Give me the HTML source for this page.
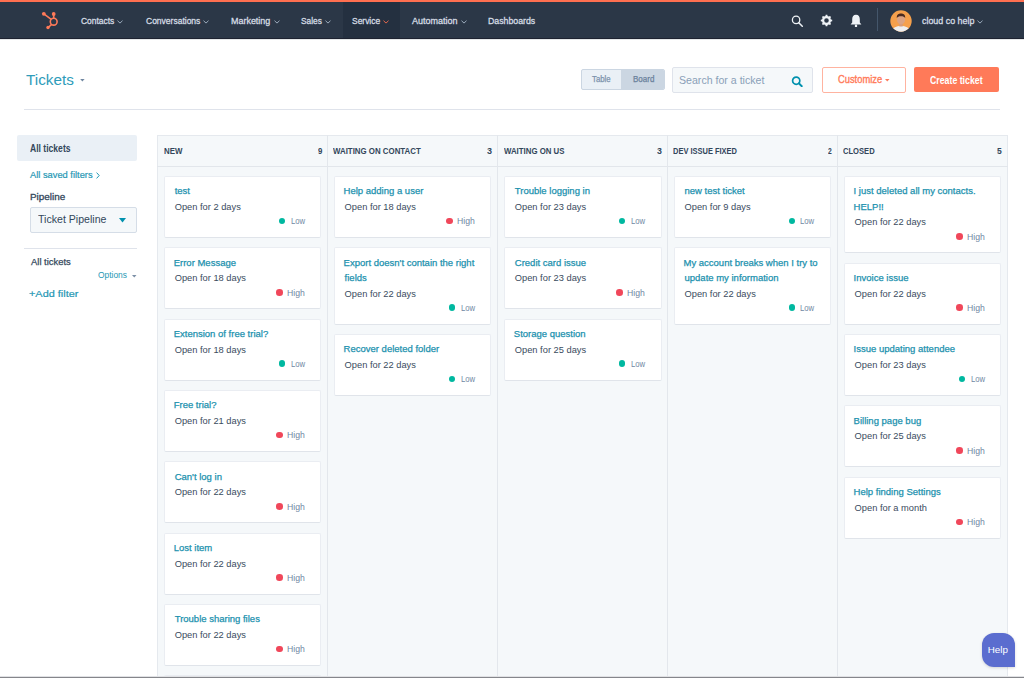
<!DOCTYPE html>
<html><head><meta charset="utf-8"><style>
*{box-sizing:border-box;margin:0;padding:0}
html,body{width:1024px;height:678px;overflow:hidden;background:#fff;font-family:"Liberation Sans",sans-serif;color:#33475b}
.a{position:absolute;white-space:nowrap}
#topbar{position:absolute;left:0;top:0;width:1024px;height:2px;background:#ff6f50}
#nav{position:absolute;left:0;top:2px;width:1024px;height:36px;background:#2b3747}
#navline{position:absolute;left:0;top:38px;width:1024px;height:1px;background:#1d2230;box-shadow:0 1px 0 #e4e7e8}
#svc{position:absolute;left:342.5px;top:2px;width:57.5px;height:36px;background:#243040}
.chev{position:absolute}
#hline{position:absolute;left:24px;top:108.5px;width:976px;height:1px;background:#dfe3eb}
#bottomline{position:absolute;left:0;top:676px;width:1024px;height:2px;background:linear-gradient(#e0e1e4 0,#e0e1e4 1px,#85868b 1px)}
#toggle{position:absolute;left:581px;top:69px;width:84px;height:21px;border:1px solid #cbd6e2;border-radius:2px;background:#eaf0f6;overflow:hidden}
#toggle .b{position:absolute;left:39px;top:0;width:44px;height:19px;background:#cbd6e2}
#search{position:absolute;left:672px;top:67px;width:141px;height:26px;border:1px solid #dfe3eb;border-radius:2px;background:#f5f8fa}
#cust{position:absolute;left:822px;top:66.5px;width:84px;height:26px;border:1px solid #ffb3a0;border-radius:2px;background:#fff}
#create{position:absolute;left:914px;top:66.7px;width:85px;height:25.5px;border-radius:2px;background:#ff7a59}
#sideact{position:absolute;left:17px;top:135px;width:120px;height:26px;background:#eaf0f6;border-radius:2px}
#sel{position:absolute;left:30px;top:207.3px;width:107px;height:25.5px;border:1px solid #d5dde7;border-radius:2px;background:#f5f8fa}
#sdiv{position:absolute;left:24px;top:248px;width:113px;height:1px;background:#dfe3eb}
#board{position:absolute;left:157px;top:134.5px;width:851px;height:560px;background:#f5f8fa;border:1px solid #e5e9ee}
#bhead{position:absolute;left:157px;top:166px;width:851px;height:1px;background:#e2e6eb}
.col{position:absolute;top:135px;width:1px;height:545px;background:#e3e7ec}
.card{position:absolute;width:157.5px;background:#fff;border:1px solid #eaedf2;border-bottom-color:#e0e4ea;border-radius:2px}
.dot{position:absolute;width:6.2px;height:6.2px;border-radius:50%}
#help{position:absolute;left:982px;top:633px;width:33px;height:34px;background:#5b6dcf;border-radius:12px 12px 0 12px;box-shadow:0 1px 3px rgba(0,0,0,0.15)}
</style></head><body>
<div id="topbar"></div><div id="nav"></div><div id="svc"></div><div id="navline"></div>
<svg class="a" style="left:40px;top:10px" width="22" height="22" viewBox="0 0 22 22">
<g fill="none" stroke="#ff7a59" stroke-width="1.6">
<circle cx="13.7" cy="11.7" r="3.4"/>
<line x1="13.7" y1="8.3" x2="13.7" y2="4.5"/>
<line x1="11.2" y1="9.4" x2="4.2" y2="4.2"/>
<line x1="11.6" y1="14.4" x2="8.3" y2="17.5"/>
</g>
<g fill="#ff7a59"><circle cx="13.7" cy="4" r="1.9"/><circle cx="3.8" cy="3.8" r="1.9"/><circle cx="8" cy="17.5" r="1.7"/></g>
</svg>
<div class="a" style="left:80.80px;top:16.00px;font-size:9.4px;line-height:9.4px;font-weight:400;color:#d5dce4;transform:scaleX(0.9000);transform-origin:0 0;-webkit-text-stroke:0.3px #d5dce4;">Contacts</div>
<svg class="chev" style="left:117px;top:19.7px" width="6" height="4" viewBox="0 0 6 4"><path d="M0.5 0.7 L3.0 3.1 L5.5 0.7" fill="none" stroke="#a3b3c4" stroke-width="0.95"/></svg>
<div class="a" style="left:145.60px;top:16.00px;font-size:9.4px;line-height:9.4px;font-weight:400;color:#d5dce4;transform:scaleX(0.9067);transform-origin:0 0;-webkit-text-stroke:0.3px #d5dce4;">Conversations</div>
<svg class="chev" style="left:203px;top:19.7px" width="6" height="4" viewBox="0 0 6 4"><path d="M0.5 0.7 L3.0 3.1 L5.5 0.7" fill="none" stroke="#a3b3c4" stroke-width="0.95"/></svg>
<div class="a" style="left:231.24px;top:16.00px;font-size:9.4px;line-height:9.4px;font-weight:400;color:#d5dce4;transform:scaleX(0.9550);transform-origin:0 0;-webkit-text-stroke:0.3px #d5dce4;">Marketing</div>
<svg class="chev" style="left:273.7px;top:19.7px" width="6" height="4" viewBox="0 0 6 4"><path d="M0.5 0.7 L3.0 3.1 L5.5 0.7" fill="none" stroke="#a3b3c4" stroke-width="0.95"/></svg>
<div class="a" style="left:301.21px;top:16.00px;font-size:9.4px;line-height:9.4px;font-weight:400;color:#d5dce4;transform:scaleX(0.8864);transform-origin:0 0;-webkit-text-stroke:0.3px #d5dce4;">Sales</div>
<svg class="chev" style="left:324.5px;top:19.7px" width="6" height="4" viewBox="0 0 6 4"><path d="M0.5 0.7 L3.0 3.1 L5.5 0.7" fill="none" stroke="#a3b3c4" stroke-width="0.95"/></svg>
<div class="a" style="left:352.30px;top:16.00px;font-size:9.4px;line-height:9.4px;font-weight:400;color:#d5dce4;transform:scaleX(0.9000);transform-origin:0 0;-webkit-text-stroke:0.3px #d5dce4;">Service</div>
<svg class="chev" style="left:382.7px;top:19.7px" width="6" height="4" viewBox="0 0 6 4"><path d="M0.5 0.7 L3.0 3.1 L5.5 0.7" fill="none" stroke="#ef6a4c" stroke-width="0.95"/></svg>
<div class="a" style="left:411.90px;top:16.00px;font-size:9.4px;line-height:9.4px;font-weight:400;color:#d5dce4;transform:scaleX(0.9596);transform-origin:0 0;-webkit-text-stroke:0.3px #d5dce4;">Automation</div>
<svg class="chev" style="left:461px;top:19.7px" width="6" height="4" viewBox="0 0 6 4"><path d="M0.5 0.7 L3.0 3.1 L5.5 0.7" fill="none" stroke="#a3b3c4" stroke-width="0.95"/></svg>
<div class="a" style="left:487.97px;top:16.00px;font-size:9.4px;line-height:9.4px;font-weight:400;color:#d5dce4;transform:scaleX(0.9347);transform-origin:0 0;-webkit-text-stroke:0.3px #d5dce4;">Dashboards</div>
<svg class="a" style="left:789px;top:13px" width="16" height="16" viewBox="0 0 16 16"><circle cx="7.1" cy="6.9" r="3.7" fill="none" stroke="#eef2f6" stroke-width="1.3"/><line x1="9.8" y1="9.7" x2="13.3" y2="13.2" stroke="#eef2f6" stroke-width="1.5" stroke-linecap="round"/></svg>
<svg class="a" style="left:818.9px;top:12.9px" width="15" height="15" viewBox="-7.5 -7.5 15 15"><g fill="#eef2f6"><path d="M-1.3 -3.6 L-0.8 -5.7 L0.8 -5.7 L1.3 -3.6 Z" transform="rotate(0)"/><path d="M-1.3 -3.6 L-0.8 -5.7 L0.8 -5.7 L1.3 -3.6 Z" transform="rotate(45)"/><path d="M-1.3 -3.6 L-0.8 -5.7 L0.8 -5.7 L1.3 -3.6 Z" transform="rotate(90)"/><path d="M-1.3 -3.6 L-0.8 -5.7 L0.8 -5.7 L1.3 -3.6 Z" transform="rotate(135)"/><path d="M-1.3 -3.6 L-0.8 -5.7 L0.8 -5.7 L1.3 -3.6 Z" transform="rotate(180)"/><path d="M-1.3 -3.6 L-0.8 -5.7 L0.8 -5.7 L1.3 -3.6 Z" transform="rotate(225)"/><path d="M-1.3 -3.6 L-0.8 -5.7 L0.8 -5.7 L1.3 -3.6 Z" transform="rotate(270)"/><path d="M-1.3 -3.6 L-0.8 -5.7 L0.8 -5.7 L1.3 -3.6 Z" transform="rotate(315)"/></g><circle r="3.4" fill="none" stroke="#eef2f6" stroke-width="2.2"/></svg>
<svg class="a" style="left:850px;top:14px" width="12" height="14" viewBox="0 0 12 14"><path d="M6 0.8 C3.4 0.8 2.2 2.8 2.2 5.2 L2.2 8.6 L0.6 10.6 L11.4 10.6 L9.8 8.6 L9.8 5.2 C9.8 2.8 8.6 0.8 6 0.8 Z" fill="#eef2f6"/><rect x="4.9" y="10.6" width="2.2" height="2.4" fill="#eef2f6"/></svg>
<div class="a" style="left:877px;top:8px;width:1px;height:23px;background:#44566b"></div>
<svg class="a" style="left:890px;top:9.5px" width="22" height="22" viewBox="0 0 22 22"><defs><clipPath id="av"><circle cx="11" cy="11" r="10.7"/></clipPath></defs><g clip-path="url(#av)"><rect width="22" height="22" fill="#f5a04c"/><path d="M1.5 22 C2.5 17.5 6.5 16 11 16 C15.5 16 19.5 17.5 20.5 22 Z" fill="#eeeeef"/><rect x="9.3" y="13" width="3.4" height="3.5" fill="#d49a7a"/><ellipse cx="11" cy="9.6" rx="4.1" ry="4.9" fill="#dca383"/><path d="M6.8 8.2 C6.6 4.6 8.6 3.6 11 3.6 C13.4 3.6 15.4 4.6 15.2 8.2 C14.6 6.6 13 6.2 11 6.2 C9 6.2 7.4 6.6 6.8 8.2Z" fill="#4b2a1f"/></g></svg>
<div class="a" style="left:921.60px;top:15.90px;font-size:9.4px;line-height:9.4px;font-weight:400;color:#d5dce4;transform:scaleX(0.9491);transform-origin:0 0;-webkit-text-stroke:0.3px #d5dce4;">cloud co help</div>
<svg class="chev" style="left:976.7px;top:19.7px" width="6" height="4" viewBox="0 0 6 4"><path d="M0.5 0.7 L3.0 3.1 L5.5 0.7" fill="none" stroke="#a3b3c4" stroke-width="0.95"/></svg>
<div class="a" style="left:26.10px;top:71.70px;font-size:15px;line-height:15px;font-weight:400;color:#2e9cba;transform:scaleX(1.0191);transform-origin:0 0;">Tickets</div>
<svg class="a" style="left:80px;top:78.7px" width="5" height="3" viewBox="0 0 5 3"><path d="M0.2 0 L4.6 0 L2.4 2.5Z" fill="#6f86a0"/></svg>
<div id="hline"></div>
<div id="toggle"><div class="b"></div></div>
<div class="a" style="left:592.00px;top:75.00px;font-size:8.4px;line-height:8.4px;font-weight:400;color:#7d93ad;transform:scaleX(0.9300);transform-origin:0 0;-webkit-text-stroke:0.25px #7d93ad;">Table</div>
<div class="a" style="left:632.60px;top:75.00px;font-size:8.4px;line-height:8.4px;font-weight:400;color:#6a819c;transform:scaleX(0.9545);transform-origin:0 0;-webkit-text-stroke:0.25px #6a819c;">Board</div>
<div id="search"></div>
<div class="a" style="left:678.82px;top:75.20px;font-size:10.8px;line-height:10.8px;font-weight:400;color:#8aa0b8;transform:scaleX(0.9814);transform-origin:0 0;">Search for a ticket</div>
<svg class="a" style="left:791px;top:76px" width="13" height="11" viewBox="0 0 13 11"><circle cx="5.2" cy="4.7" r="3.6" fill="none" stroke="#0091ae" stroke-width="1.7"/><line x1="7.8" y1="7.3" x2="10.8" y2="10.2" stroke="#0091ae" stroke-width="1.9" stroke-linecap="round"/></svg>
<div id="cust"></div>
<div class="a" style="left:837.50px;top:75.40px;font-size:10px;line-height:10px;font-weight:400;color:#ff7a59;transform:scaleX(0.9340);transform-origin:0 0;-webkit-text-stroke:0.35px #ff7a59;">Customize</div>
<svg class="a" style="left:885.3px;top:78.5px" width="5" height="3" viewBox="0 0 5 3"><path d="M0 0 L4.5 0 L2.25 2.6Z" fill="#ff7a59"/></svg>
<div id="create"></div>
<div class="a" style="left:929.90px;top:75.70px;font-size:10.3px;line-height:10.3px;font-weight:700;color:#ffffff;transform:scaleX(0.8500);transform-origin:0 0;">Create ticket</div>
<div id="sideact"></div>
<div class="a" style="left:30.40px;top:143.80px;font-size:10px;line-height:10px;font-weight:700;color:#33475b;transform:scaleX(0.8574);transform-origin:0 0;">All tickets</div>
<div class="a" style="left:30.40px;top:170.00px;font-size:9.5px;line-height:9.5px;font-weight:400;color:#1f97b4;transform:scaleX(0.9797);transform-origin:0 0;-webkit-text-stroke:0.2px #1f97b4;">All saved filters</div>
<svg class="a" style="left:96px;top:172px" width="4" height="7" viewBox="0 0 4 7"><path d="M0.6 0.6 L3.2 3.5 L0.6 6.4" fill="none" stroke="#1f97b4" stroke-width="1"/></svg>
<div class="a" style="left:29.96px;top:191.70px;font-size:9.5px;line-height:9.5px;font-weight:400;color:#33475b;transform:scaleX(1.0406);transform-origin:0 0;-webkit-text-stroke:0.3px #33475b;">Pipeline</div>
<div id="sel"></div>
<div class="a" style="left:38.00px;top:213.40px;font-size:11.7px;line-height:11.7px;font-weight:400;color:#33475b;transform:scaleX(0.9053);transform-origin:0 0;">Ticket Pipeline</div>
<svg class="a" style="left:118.5px;top:217.5px" width="7" height="5" viewBox="0 0 7 5"><path d="M0 0 L7 0 L3.5 4.5Z" fill="#0091ae"/></svg>
<div id="sdiv"></div>
<div class="a" style="left:30.50px;top:257.30px;font-size:9.5px;line-height:9.5px;font-weight:400;color:#33475b;transform:scaleX(0.9925);transform-origin:0 0;-webkit-text-stroke:0.25px #33475b;">All tickets</div>
<div class="a" style="left:97.50px;top:271.30px;font-size:8.8px;line-height:8.8px;font-weight:400;color:#1f97b4;transform:scaleX(0.9567);transform-origin:0 0;">Options</div>
<svg class="a" style="left:132.3px;top:274.5px" width="5" height="3" viewBox="0 0 5 3"><path d="M0 0 L4.5 0 L2.25 2.6Z" fill="#7b8fa6"/></svg>
<div class="a" style="left:29.39px;top:289.40px;font-size:9.8px;line-height:9.8px;font-weight:400;color:#1f97b4;transform:scaleX(1.1140);transform-origin:0 0;-webkit-text-stroke:0.2px #1f97b4;">+Add filter</div>
<div id="board"></div><div id="bhead"></div>
<div class="a" style="left:163.80px;top:147.90px;font-size:8.2px;line-height:8.2px;font-weight:700;color:#33475b;transform:scaleX(0.9632);transform-origin:0 0;">NEW</div>
<div class="a" style="left:317.70px;top:147.90px;font-size:8.2px;line-height:8.2px;font-weight:700;color:#33475b;transform:scaleX(0.9600);transform-origin:0 0;">9</div>
<div class="card" style="left:163.90px;top:175.75px;height:62.00px"></div>
<div class="a" style="left:174.70px;top:186.15px;font-size:9.5px;line-height:9.5px;font-weight:400;color:#1b91ae;-webkit-text-stroke:0.25px #1b91ae;">test</div>
<div class="a" style="left:174.70px;top:202.85px;font-size:9.3px;line-height:9.3px;font-weight:400;color:#3a4b5e;">Open for 2 days</div>
<div class="a" style="left:290.60px;top:217.15px;font-size:8.3px;line-height:8.3px;font-weight:400;color:#7088a4;transform:scaleX(0.9333);transform-origin:0 0;">Low</div>
<div class="dot" style="left:278.80px;top:217.55px;background:#00b8a0;width:6.6px;height:6.6px"></div>
<div class="card" style="left:163.90px;top:247.13px;height:62.00px"></div>
<div class="a" style="left:173.70px;top:257.53px;font-size:9.5px;line-height:9.5px;font-weight:400;color:#1b91ae;-webkit-text-stroke:0.25px #1b91ae;">Error Message</div>
<div class="a" style="left:174.70px;top:274.23px;font-size:9.3px;line-height:9.3px;font-weight:400;color:#3a4b5e;">Open for 18 days</div>
<div class="a" style="left:286.86px;top:288.53px;font-size:8.3px;line-height:8.3px;font-weight:400;color:#7088a4;transform:scaleX(1.0437);transform-origin:0 0;">High</div>
<div class="dot" style="left:276.10px;top:288.93px;background:#f0475a;width:6.6px;height:6.6px"></div>
<div class="card" style="left:163.90px;top:318.51px;height:62.00px"></div>
<div class="a" style="left:173.70px;top:328.91px;font-size:9.5px;line-height:9.5px;font-weight:400;color:#1b91ae;-webkit-text-stroke:0.25px #1b91ae;">Extension of free trial?</div>
<div class="a" style="left:174.70px;top:345.61px;font-size:9.3px;line-height:9.3px;font-weight:400;color:#3a4b5e;">Open for 18 days</div>
<div class="a" style="left:290.60px;top:359.91px;font-size:8.3px;line-height:8.3px;font-weight:400;color:#7088a4;transform:scaleX(0.9333);transform-origin:0 0;">Low</div>
<div class="dot" style="left:278.80px;top:360.31px;background:#00b8a0;width:6.6px;height:6.6px"></div>
<div class="card" style="left:163.90px;top:389.89px;height:62.00px"></div>
<div class="a" style="left:173.70px;top:400.29px;font-size:9.5px;line-height:9.5px;font-weight:400;color:#1b91ae;-webkit-text-stroke:0.25px #1b91ae;">Free trial?</div>
<div class="a" style="left:174.70px;top:416.99px;font-size:9.3px;line-height:9.3px;font-weight:400;color:#3a4b5e;">Open for 21 days</div>
<div class="a" style="left:286.86px;top:431.29px;font-size:8.3px;line-height:8.3px;font-weight:400;color:#7088a4;transform:scaleX(1.0437);transform-origin:0 0;">High</div>
<div class="dot" style="left:276.10px;top:431.69px;background:#f0475a;width:6.6px;height:6.6px"></div>
<div class="card" style="left:163.90px;top:461.27px;height:62.00px"></div>
<div class="a" style="left:174.70px;top:471.67px;font-size:9.5px;line-height:9.5px;font-weight:400;color:#1b91ae;-webkit-text-stroke:0.25px #1b91ae;">Can't log in</div>
<div class="a" style="left:174.70px;top:488.37px;font-size:9.3px;line-height:9.3px;font-weight:400;color:#3a4b5e;">Open for 22 days</div>
<div class="a" style="left:286.86px;top:502.67px;font-size:8.3px;line-height:8.3px;font-weight:400;color:#7088a4;transform:scaleX(1.0437);transform-origin:0 0;">High</div>
<div class="dot" style="left:276.10px;top:503.07px;background:#f0475a;width:6.6px;height:6.6px"></div>
<div class="card" style="left:163.90px;top:532.65px;height:62.00px"></div>
<div class="a" style="left:173.70px;top:543.05px;font-size:9.5px;line-height:9.5px;font-weight:400;color:#1b91ae;-webkit-text-stroke:0.25px #1b91ae;">Lost item</div>
<div class="a" style="left:174.70px;top:559.75px;font-size:9.3px;line-height:9.3px;font-weight:400;color:#3a4b5e;">Open for 22 days</div>
<div class="a" style="left:286.86px;top:574.05px;font-size:8.3px;line-height:8.3px;font-weight:400;color:#7088a4;transform:scaleX(1.0437);transform-origin:0 0;">High</div>
<div class="dot" style="left:276.10px;top:574.45px;background:#f0475a;width:6.6px;height:6.6px"></div>
<div class="card" style="left:163.90px;top:604.03px;height:62.00px"></div>
<div class="a" style="left:174.70px;top:614.43px;font-size:9.5px;line-height:9.5px;font-weight:400;color:#1b91ae;-webkit-text-stroke:0.25px #1b91ae;">Trouble sharing files</div>
<div class="a" style="left:174.70px;top:631.13px;font-size:9.3px;line-height:9.3px;font-weight:400;color:#3a4b5e;">Open for 22 days</div>
<div class="a" style="left:286.86px;top:645.43px;font-size:8.3px;line-height:8.3px;font-weight:400;color:#7088a4;transform:scaleX(1.0437);transform-origin:0 0;">High</div>
<div class="dot" style="left:276.10px;top:645.83px;background:#f0475a;width:6.6px;height:6.6px"></div>
<div class="card" style="left:163.90px;top:675.41px;height:62.00px"></div>
<div class="a" style="left:173.70px;top:685.81px;font-size:9.5px;line-height:9.5px;font-weight:400;color:#1b91ae;-webkit-text-stroke:0.25px #1b91ae;">Unable to export</div>
<div class="a" style="left:174.70px;top:702.51px;font-size:9.3px;line-height:9.3px;font-weight:400;color:#3a4b5e;">Open for 22 days</div>
<div class="a" style="left:286.86px;top:716.81px;font-size:8.3px;line-height:8.3px;font-weight:400;color:#7088a4;transform:scaleX(1.0437);transform-origin:0 0;">High</div>
<div class="dot" style="left:276.10px;top:717.21px;background:#f0475a;width:6.6px;height:6.6px"></div>
<div class="col" style="left:326.8px"></div>
<div class="a" style="left:333.40px;top:147.90px;font-size:8.2px;line-height:8.2px;font-weight:700;color:#33475b;transform:scaleX(0.9615);transform-origin:0 0;">WAITING ON CONTACT</div>
<div class="a" style="left:487.20px;top:147.90px;font-size:8.2px;line-height:8.2px;font-weight:700;color:#33475b;transform:scaleX(1.1000);transform-origin:0 0;">3</div>
<div class="card" style="left:333.80px;top:175.75px;height:62.00px"></div>
<div class="a" style="left:343.60px;top:186.15px;font-size:9.5px;line-height:9.5px;font-weight:400;color:#1b91ae;-webkit-text-stroke:0.25px #1b91ae;">Help adding a user</div>
<div class="a" style="left:344.60px;top:202.85px;font-size:9.3px;line-height:9.3px;font-weight:400;color:#3a4b5e;">Open for 18 days</div>
<div class="a" style="left:456.76px;top:217.15px;font-size:8.3px;line-height:8.3px;font-weight:400;color:#7088a4;transform:scaleX(1.0437);transform-origin:0 0;">High</div>
<div class="dot" style="left:446.00px;top:217.55px;background:#f0475a;width:6.6px;height:6.6px"></div>
<div class="card" style="left:333.80px;top:247.13px;height:77.50px"></div>
<div class="a" style="left:343.60px;top:257.53px;font-size:9.5px;line-height:9.5px;font-weight:400;color:#1b91ae;-webkit-text-stroke:0.25px #1b91ae;">Export doesn't contain the right</div>
<div class="a" style="left:344.60px;top:273.03px;font-size:9.5px;line-height:9.5px;font-weight:400;color:#1b91ae;-webkit-text-stroke:0.25px #1b91ae;">fields</div>
<div class="a" style="left:344.60px;top:289.73px;font-size:9.3px;line-height:9.3px;font-weight:400;color:#3a4b5e;">Open for 22 days</div>
<div class="a" style="left:460.50px;top:304.03px;font-size:8.3px;line-height:8.3px;font-weight:400;color:#7088a4;transform:scaleX(0.9333);transform-origin:0 0;">Low</div>
<div class="dot" style="left:448.70px;top:304.43px;background:#00b8a0;width:6.6px;height:6.6px"></div>
<div class="card" style="left:333.80px;top:334.01px;height:62.00px"></div>
<div class="a" style="left:343.60px;top:344.41px;font-size:9.5px;line-height:9.5px;font-weight:400;color:#1b91ae;-webkit-text-stroke:0.25px #1b91ae;">Recover deleted folder</div>
<div class="a" style="left:344.60px;top:361.11px;font-size:9.3px;line-height:9.3px;font-weight:400;color:#3a4b5e;">Open for 22 days</div>
<div class="a" style="left:460.50px;top:375.41px;font-size:8.3px;line-height:8.3px;font-weight:400;color:#7088a4;transform:scaleX(0.9333);transform-origin:0 0;">Low</div>
<div class="dot" style="left:448.70px;top:375.81px;background:#00b8a0;width:6.6px;height:6.6px"></div>
<div class="col" style="left:497.0px"></div>
<div class="a" style="left:503.60px;top:147.90px;font-size:8.2px;line-height:8.2px;font-weight:700;color:#33475b;transform:scaleX(0.9556);transform-origin:0 0;">WAITING ON US</div>
<div class="a" style="left:657.20px;top:147.90px;font-size:8.2px;line-height:8.2px;font-weight:700;color:#33475b;transform:scaleX(1.0750);transform-origin:0 0;">3</div>
<div class="card" style="left:504.00px;top:175.75px;height:62.00px"></div>
<div class="a" style="left:514.80px;top:186.15px;font-size:9.5px;line-height:9.5px;font-weight:400;color:#1b91ae;-webkit-text-stroke:0.25px #1b91ae;">Trouble logging in</div>
<div class="a" style="left:514.80px;top:202.85px;font-size:9.3px;line-height:9.3px;font-weight:400;color:#3a4b5e;">Open for 23 days</div>
<div class="a" style="left:630.70px;top:217.15px;font-size:8.3px;line-height:8.3px;font-weight:400;color:#7088a4;transform:scaleX(0.9333);transform-origin:0 0;">Low</div>
<div class="dot" style="left:618.90px;top:217.55px;background:#00b8a0;width:6.6px;height:6.6px"></div>
<div class="card" style="left:504.00px;top:247.13px;height:62.00px"></div>
<div class="a" style="left:514.80px;top:257.53px;font-size:9.5px;line-height:9.5px;font-weight:400;color:#1b91ae;-webkit-text-stroke:0.25px #1b91ae;">Credit card issue</div>
<div class="a" style="left:514.80px;top:274.23px;font-size:9.3px;line-height:9.3px;font-weight:400;color:#3a4b5e;">Open for 23 days</div>
<div class="a" style="left:626.96px;top:288.53px;font-size:8.3px;line-height:8.3px;font-weight:400;color:#7088a4;transform:scaleX(1.0438);transform-origin:0 0;">High</div>
<div class="dot" style="left:616.20px;top:288.93px;background:#f0475a;width:6.6px;height:6.6px"></div>
<div class="card" style="left:504.00px;top:318.51px;height:62.00px"></div>
<div class="a" style="left:513.80px;top:328.91px;font-size:9.5px;line-height:9.5px;font-weight:400;color:#1b91ae;-webkit-text-stroke:0.25px #1b91ae;">Storage question</div>
<div class="a" style="left:514.80px;top:345.61px;font-size:9.3px;line-height:9.3px;font-weight:400;color:#3a4b5e;">Open for 25 days</div>
<div class="a" style="left:630.70px;top:359.91px;font-size:8.3px;line-height:8.3px;font-weight:400;color:#7088a4;transform:scaleX(0.9333);transform-origin:0 0;">Low</div>
<div class="dot" style="left:618.90px;top:360.31px;background:#00b8a0;width:6.6px;height:6.6px"></div>
<div class="col" style="left:666.7px"></div>
<div class="a" style="left:673.00px;top:147.90px;font-size:8.2px;line-height:8.2px;font-weight:700;color:#33475b;transform:scaleX(0.9129);transform-origin:0 0;">DEV ISSUE FIXED</div>
<div class="a" style="left:827.50px;top:147.90px;font-size:8.2px;line-height:8.2px;font-weight:700;color:#33475b;transform:scaleX(0.8200);transform-origin:0 0;">2</div>
<div class="card" style="left:673.70px;top:175.75px;height:62.00px"></div>
<div class="a" style="left:684.50px;top:186.15px;font-size:9.5px;line-height:9.5px;font-weight:400;color:#1b91ae;-webkit-text-stroke:0.25px #1b91ae;">new test ticket</div>
<div class="a" style="left:684.50px;top:202.85px;font-size:9.3px;line-height:9.3px;font-weight:400;color:#3a4b5e;">Open for 9 days</div>
<div class="a" style="left:800.40px;top:217.15px;font-size:8.3px;line-height:8.3px;font-weight:400;color:#7088a4;transform:scaleX(0.9333);transform-origin:0 0;">Low</div>
<div class="dot" style="left:788.60px;top:217.55px;background:#00b8a0;width:6.6px;height:6.6px"></div>
<div class="card" style="left:673.70px;top:247.13px;height:77.50px"></div>
<div class="a" style="left:683.50px;top:257.53px;font-size:9.5px;line-height:9.5px;font-weight:400;color:#1b91ae;-webkit-text-stroke:0.25px #1b91ae;">My account breaks when I try to</div>
<div class="a" style="left:684.50px;top:273.03px;font-size:9.5px;line-height:9.5px;font-weight:400;color:#1b91ae;-webkit-text-stroke:0.25px #1b91ae;">update my information</div>
<div class="a" style="left:684.50px;top:289.73px;font-size:9.3px;line-height:9.3px;font-weight:400;color:#3a4b5e;">Open for 22 days</div>
<div class="a" style="left:800.40px;top:304.03px;font-size:8.3px;line-height:8.3px;font-weight:400;color:#7088a4;transform:scaleX(0.9333);transform-origin:0 0;">Low</div>
<div class="dot" style="left:788.60px;top:304.43px;background:#00b8a0;width:6.6px;height:6.6px"></div>
<div class="col" style="left:836.8px"></div>
<div class="a" style="left:842.80px;top:147.90px;font-size:8.2px;line-height:8.2px;font-weight:700;color:#33475b;transform:scaleX(0.9265);transform-origin:0 0;">CLOSED</div>
<div class="a" style="left:996.60px;top:147.90px;font-size:8.2px;line-height:8.2px;font-weight:700;color:#33475b;transform:scaleX(1.0400);transform-origin:0 0;">5</div>
<div class="card" style="left:843.80px;top:175.75px;height:77.50px"></div>
<div class="a" style="left:853.60px;top:186.15px;font-size:9.5px;line-height:9.5px;font-weight:400;color:#1b91ae;-webkit-text-stroke:0.25px #1b91ae;">I just deleted all my contacts.</div>
<div class="a" style="left:853.60px;top:201.65px;font-size:9.5px;line-height:9.5px;font-weight:400;color:#1b91ae;-webkit-text-stroke:0.25px #1b91ae;">HELP!!</div>
<div class="a" style="left:854.60px;top:218.35px;font-size:9.3px;line-height:9.3px;font-weight:400;color:#3a4b5e;">Open for 22 days</div>
<div class="a" style="left:966.76px;top:232.65px;font-size:8.3px;line-height:8.3px;font-weight:400;color:#7088a4;transform:scaleX(1.0438);transform-origin:0 0;">High</div>
<div class="dot" style="left:956.00px;top:233.05px;background:#f0475a;width:6.6px;height:6.6px"></div>
<div class="card" style="left:843.80px;top:262.63px;height:62.00px"></div>
<div class="a" style="left:853.60px;top:273.03px;font-size:9.5px;line-height:9.5px;font-weight:400;color:#1b91ae;-webkit-text-stroke:0.25px #1b91ae;">Invoice issue</div>
<div class="a" style="left:854.60px;top:289.73px;font-size:9.3px;line-height:9.3px;font-weight:400;color:#3a4b5e;">Open for 22 days</div>
<div class="a" style="left:966.76px;top:304.03px;font-size:8.3px;line-height:8.3px;font-weight:400;color:#7088a4;transform:scaleX(1.0438);transform-origin:0 0;">High</div>
<div class="dot" style="left:956.00px;top:304.43px;background:#f0475a;width:6.6px;height:6.6px"></div>
<div class="card" style="left:843.80px;top:334.01px;height:62.00px"></div>
<div class="a" style="left:853.60px;top:344.41px;font-size:9.5px;line-height:9.5px;font-weight:400;color:#1b91ae;-webkit-text-stroke:0.25px #1b91ae;">Issue updating attendee</div>
<div class="a" style="left:854.60px;top:361.11px;font-size:9.3px;line-height:9.3px;font-weight:400;color:#3a4b5e;">Open for 23 days</div>
<div class="a" style="left:970.50px;top:375.41px;font-size:8.3px;line-height:8.3px;font-weight:400;color:#7088a4;transform:scaleX(0.9333);transform-origin:0 0;">Low</div>
<div class="dot" style="left:958.70px;top:375.81px;background:#00b8a0;width:6.6px;height:6.6px"></div>
<div class="card" style="left:843.80px;top:405.39px;height:62.00px"></div>
<div class="a" style="left:853.60px;top:415.79px;font-size:9.5px;line-height:9.5px;font-weight:400;color:#1b91ae;-webkit-text-stroke:0.25px #1b91ae;">Billing page bug</div>
<div class="a" style="left:854.60px;top:432.49px;font-size:9.3px;line-height:9.3px;font-weight:400;color:#3a4b5e;">Open for 25 days</div>
<div class="a" style="left:966.76px;top:446.79px;font-size:8.3px;line-height:8.3px;font-weight:400;color:#7088a4;transform:scaleX(1.0438);transform-origin:0 0;">High</div>
<div class="dot" style="left:956.00px;top:447.19px;background:#f0475a;width:6.6px;height:6.6px"></div>
<div class="card" style="left:843.80px;top:476.77px;height:62.00px"></div>
<div class="a" style="left:853.60px;top:487.17px;font-size:9.5px;line-height:9.5px;font-weight:400;color:#1b91ae;-webkit-text-stroke:0.25px #1b91ae;">Help finding Settings</div>
<div class="a" style="left:854.60px;top:503.87px;font-size:9.3px;line-height:9.3px;font-weight:400;color:#3a4b5e;">Open for a month</div>
<div class="a" style="left:966.76px;top:518.17px;font-size:8.3px;line-height:8.3px;font-weight:400;color:#7088a4;transform:scaleX(1.0438);transform-origin:0 0;">High</div>
<div class="dot" style="left:956.00px;top:518.57px;background:#f0475a;width:6.6px;height:6.6px"></div>
<div id="help"></div>
<div class="a" style="left:987.70px;top:645.00px;font-size:9.8px;line-height:9.8px;font-weight:400;color:#ffffff;">Help</div>
<div id="bottomline"></div>
</body></html>
